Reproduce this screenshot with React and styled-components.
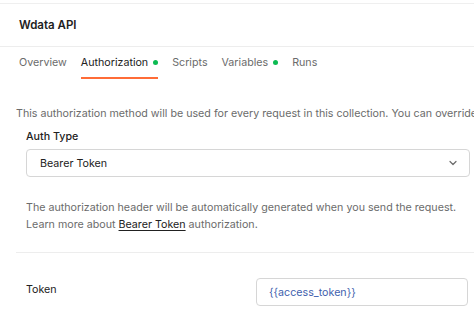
import React from "react";
import styled, { createGlobalStyle } from "styled-components";

const GlobalStyle = createGlobalStyle`
  html, body {
    margin: 0;
    padding: 0;
    background: #ffffff;
  }
  body {
    font-family: Inter, "Noto Sans", sans-serif;
    font-size: 10.7px;
    color: #212121;
    overflow: hidden;
  }
`;

const Page = styled.div`
  width: 474px;
  height: 310px;
  overflow: hidden;
  padding-top: 3px;
  box-sizing: border-box;
`;

const Header = styled.div`
  display: flex;
  align-items: center;
  height: 42px;
  padding-left: 19px;
  border-top: 1px solid #efefef;
  border-bottom: 1px solid #ededed;
  font-size: 11.5px;
  font-weight: 600;
  color: #212121;
`;

const Tabs = styled.div`
  display: flex;
  gap: 14px;
  padding-left: 19px;
  height: 32px;
`;

const Tab = styled.div`
  display: flex;
  align-items: center;
  gap: 5px;
  height: 100%;
  box-sizing: border-box;
  color: ${(p) => (p.$active ? "#212121" : "#6b6b6b")};
  border-bottom: 2px solid ${(p) => (p.$active ? "#ff6c37" : "transparent")};
  padding-top: 1px;
  white-space: nowrap;
`;

const Dot = styled.span`
  width: 5px;
  height: 5px;
  border-radius: 50%;
  background: #0cbb52;
`;

const Content = styled.div`
  padding: 27px 0 0 16px;
`;

const Description = styled.p`
  margin: 0;
  color: #6b6b6b;
  white-space: nowrap;
  line-height: 16px;
`;

const Section = styled.div`
  padding: 7px 4px 0 10px;
`;

const Label = styled.div`
  font-weight: 500;
  color: #212121;
  line-height: 16px;
  margin-bottom: 4px;
`;

const Select = styled.div`
  display: flex;
  align-items: center;
  justify-content: space-between;
  height: 28px;
  box-sizing: border-box;
  border: 1px solid #d6d6d6;
  border-radius: 4px;
  padding: 0 10px 0 13px;
  color: #212121;
`;

const Help = styled.p`
  margin: 22px 0 0;
  color: #6b6b6b;
  line-height: 17px;
  white-space: nowrap;
`;

const HelpLink = styled.a`
  color: #212121;
  text-decoration: underline;
  text-underline-offset: 2px;
`;

const Divider = styled.div`
  height: 1px;
  background: #ededed;
  margin-top: 19px;
`;

const FieldRow = styled.div`
  display: grid;
  grid-template-columns: 230px 212px;
  align-items: center;
  padding: 25px 0 0 10px;
`;

const FieldLabel = styled.div`
  color: #212121;
  padding-bottom: 6px;
`;

const Input = styled.div`
  height: 28px;
  box-sizing: border-box;
  border: 1px solid #d6d6d6;
  border-radius: 4px;
  display: flex;
  align-items: center;
  padding-left: 12px;
  color: #3f5fae;
`;

const Chevron = () => (
  <svg width="12" height="12" viewBox="0 0 12 12" fill="none">
    <path d="M3 4.5 6 7.5 9 4.5" stroke="#6b6b6b" strokeWidth="1.2" strokeLinecap="round" strokeLinejoin="round" />
  </svg>
);

export default function App() {
  return (
    <>
      <GlobalStyle />
      <Page>
        <Header>Wdata API</Header>
        <Tabs>
          <Tab>Overview</Tab>
          <Tab $active>
            Authorization <Dot />
          </Tab>
          <Tab>Scripts</Tab>
          <Tab>
            Variables <Dot />
          </Tab>
          <Tab>Runs</Tab>
        </Tabs>
        <Content>
          <Description>
            This authorization method will be used for every request in this collection. You can override this by specifying one in the request.
          </Description>
          <Section>
            <Label>Auth Type</Label>
            <Select>
              Bearer Token
              <Chevron />
            </Select>
            <Help>
              The authorization header will be automatically generated when you send the request.
              <br />
              Learn more about <HelpLink>Bearer Token</HelpLink> authorization.
            </Help>
          </Section>
          <Divider />
          <FieldRow>
            <FieldLabel>Token</FieldLabel>
            <Input>{"{{access_token}}"}</Input>
          </FieldRow>
        </Content>
      </Page>
    </>
  );
}
